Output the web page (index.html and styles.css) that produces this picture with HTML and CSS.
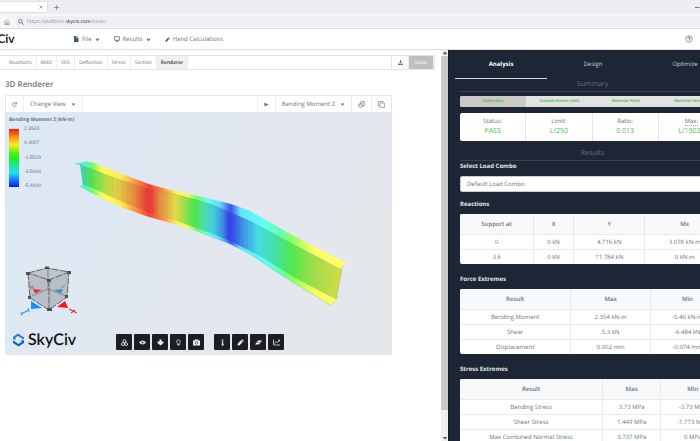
FILE: index.html
```
<!DOCTYPE html>
<html lang="en">
<head>
<meta charset="utf-8">
<title>SkyCiv Beam</title>
<link rel="stylesheet" href="styles.css">
</head>
<body>
<svg class="defs" aria-hidden="true">
  <defs>
    <symbol id="caret" viewBox="0 0 8 8"><path d="M1 2.500h6L4 6z" fill="currentColor"/></symbol>
    <symbol id="chev" viewBox="0 0 8 8"><path d="M1.500 2.500 4 5.500 6.500 2.500" fill="none" stroke="currentColor" stroke-width="1.700"/></symbol>
    <symbol id="pen" viewBox="0 0 16 16"><path d="M1 15l1-5 7-7 4 4-7 7zM10 2l2-1.500 3.500 3.500L14 6z" fill="currentColor"/></symbol>
  </defs>
</svg>
<div class="tabstrip">
  <div class="tab"><button class="plain" aria-label="Close tab"><svg class="i4" viewBox="0 0 8 8"><path d="M1 1l6 6M7 1 1 7" stroke="currentColor" stroke-width="1.300"/></svg></button></div>
  <button class="plain newtab" aria-label="New tab"><svg class="i5" viewBox="0 0 10 10"><path d="M5 0v10M0 5h10" stroke="currentColor" stroke-width="1.500"/></svg></button>
  <button class="plain minimize" aria-label="Minimize"><svg class="i5" viewBox="0 0 10 10"><path d="M0 5h9" stroke="currentColor" stroke-width="2"/></svg></button>
</div>
<div class="addressbar">
  <button class="plain" aria-label="Home"><svg class="i6" viewBox="0 0 12 12" fill="none" stroke="currentColor"><path d="M1.500 5.500 6 1l4.500 4.500V11h-9zM4.500 11V7h3v4"/></svg></button>
  <label class="url">
    <svg class="i6" viewBox="0 0 12 12" fill="none" stroke="currentColor" stroke-width="1.500"><circle cx="4.500" cy="4.500" r="3.500"/><path d="M7 7l4.500 4.500"/></svg>
    <input type="text" value="https://platform.skyciv.com/beam" aria-label="Address">
  </label>
</div>
<header class="appbar">
  <a class="brand" href="#">SkyCiv</a>
  <nav class="menu">
    <button class="plain"><svg class="i6" viewBox="0 0 12 12"><path d="M2 0h5v4h4v8H2zM8 0l3 3H8z" fill="#415c6b"/></svg>File<svg class="i5"><use href="#chev"/></svg></button>
    <button class="plain"><svg class="i6" viewBox="0 0 12 12"><path d="M.8 1.500h10.400v7H.8zM6 8.500V11M3.500 11h5" fill="none" stroke="#415c6b" stroke-width="1.400"/></svg>Results<svg class="i5"><use href="#chev"/></svg></button>
    <button class="plain"><svg class="i5 dark"><use href="#pen"/></svg>Hand Calculations</button>
  </nav>
  <button class="plain help" aria-label="Help"><svg class="i8" viewBox="0 0 16 16" fill="none" stroke="#4f7186"><circle cx="8" cy="8" r="6.500" stroke-width="1.300"/><path d="M5.500 6.500C5.500 3.500 10.500 3.500 10.500 6.500 10.500 8 8 8 8 10M8 11v1.500" stroke-width="2"/></svg></button>
</header>
<main class="workspace">
  <section class="left">
    <div class="content">
      <div class="modes">
        <button>Reactions</button><button>BMD</button><button>SFD</button><button>Deflection</button><button>Stress</button><button>Section</button><button class="on">Renderer</button>
        <button class="download" aria-label="Download"><svg class="i5" viewBox="0 0 10 10"><path d="M4 0h2v4h2L5 7 2 4h2zM0 7h2l3 1.500L8 7h2v3H0z" fill="currentColor"/></svg></button>
        <button class="solve">Solve</button>
      </div>
      <h1>3D Renderer</h1>
      <div class="viewer">
        <div class="viewbar">
          <button aria-label="Reset"><svg class="i5" viewBox="0 0 10 10"><path d="M8 3A4 4 0 1 0 8.500 6.500M9 0v4H5" fill="none" stroke="currentColor" stroke-width="1.400"/></svg></button>
          <button>Change View<svg class="i5"><use href="#caret"/></svg></button>
          <button class="play" aria-label="Play"><svg class="i5" viewBox="0 0 12 12"><path d="M1 1l10 5-10 5z" fill="currentColor"/></svg></button>
          <button>Bending Moment Z<svg class="i5"><use href="#caret"/></svg></button>
          <button aria-label="Paste"><svg class="i7" viewBox="0 0 14 14" fill="none" stroke="currentColor" stroke-width="1.300"><path d="M6 3.500V1h6.500v8.500H8M5.500 4 8 6.500V12H1.500V7L4.500 4H6M5 4v3H2M8 6l3-3"/></svg></button>
          <button aria-label="Copy"><svg class="i7" viewBox="0 0 14 14" fill="none" stroke="currentColor" stroke-width="1.200"><path d="M4 10H1V1h9v3"/><rect x="4" y="4" width="9" height="9" rx="1"/></svg></button>
        </div>
        <div class="scene">
          <svg class="beam" viewBox="0 0 388 244" role="img" aria-label="Beam bending moment">
            <defs>
              <linearGradient id="web" gradientUnits="userSpaceOnUse" x1="75" y1="0" x2="347" y2="0">
                <stop offset=".02" stop-color="#3fcfc8"/><stop offset=".06" stop-color="#50e04e"/><stop offset=".12" stop-color="#c0dc48"/><stop offset=".16" stop-color="#e2cc45"/><stop offset=".22" stop-color="#e58a40"/><stop offset=".265" stop-color="#e93c38"/><stop offset=".285" stop-color="#e84038"/><stop offset=".31" stop-color="#e28a42"/><stop offset=".37" stop-color="#e3d947"/><stop offset=".44" stop-color="#4ee44d"/><stop offset=".48" stop-color="#49dcae"/><stop offset=".51" stop-color="#43d0df"/><stop offset=".545" stop-color="#3f8fe8"/><stop offset=".568" stop-color="#3540e8"/><stop offset=".583" stop-color="#3850e6"/><stop offset=".62" stop-color="#3f96e7"/><stop offset=".675" stop-color="#45dce2"/><stop offset=".74" stop-color="#48e0a4"/><stop offset=".8" stop-color="#4ee94b"/><stop offset=".86" stop-color="#90e04b"/><stop offset=".98" stop-color="#d6da48"/>
              </linearGradient>
              <linearGradient id="flange" gradientUnits="userSpaceOnUse" x1="75" y1="0" x2="347" y2="0">
                <stop offset="0" stop-color="#55f3f5"/><stop offset=".035" stop-color="#55f3d5"/><stop offset=".065" stop-color="#70fa65"/><stop offset=".1" stop-color="#fff95a"/><stop offset=".17" stop-color="#ffed55"/><stop offset=".22" stop-color="#ff9848"/><stop offset=".275" stop-color="#f33f3b"/><stop offset=".33" stop-color="#ff9446"/><stop offset=".375" stop-color="#fff557"/><stop offset=".415" stop-color="#f4ff5c"/><stop offset=".45" stop-color="#70fa72"/><stop offset=".49" stop-color="#61fff3"/><stop offset=".535" stop-color="#5cdcff"/><stop offset=".575" stop-color="#414ee9"/><stop offset=".61" stop-color="#5de7ff"/><stop offset=".7" stop-color="#62fff5"/><stop offset=".76" stop-color="#65ffad"/><stop offset=".8" stop-color="#8cff60"/><stop offset=".88" stop-color="#fcff61"/><stop offset="1" stop-color="#ffff70"/>
              </linearGradient>
              <clipPath id="webclip"><path d="M80 163 92 168 120 178 147 187 173 192 193 197 210 202 230 210 250 219 287 239 343 268 337 299 297 278 260 255 230 240 210 232 173 219 148 211.500 120 200 92 187 83 184Z"/></clipPath>
            </defs>
            <g transform="translate(-5 -111)">
              <path fill="url(#flange)" d="M79 185.500 85 183 92 187 120 199 148 210 173 217 210 229 230 238 260 253 297 276 338 295 339 297 332 305.500 283 275 250 253 230 243 210 235 190 228 170 222 147 215.500 123 207 103 198Z"/>
              <path fill="none" stroke="#35b990" stroke-opacity=".5" stroke-width=".7" d="M200 231.500 230 243 250 253 283 275 332 305"/>
              <g clip-path="url(#webclip)">
                <path fill="url(#web)" d="M75 155h275v150H75z"/>
                <path stroke="#154ba0" stroke-opacity=".1" stroke-width=".8" d="M210 190v60M214 190v60M218 190v60M222 190v60M226 190v60M236 190v60M240 190v70M244 190v70M248 190v70M252 190v70"/>
                <path stroke="#b06030" stroke-opacity=".1" stroke-width=".8" d="M108 160v50M113 160v50M118 160v50M123 160v60M128 160v60M133 160v60M138 160v60M153 160v60M158 160v60M163 160v60M168 160v60"/>
              </g>
              <path fill="url(#flange)" d="M75 162.500 86 160.500 93 161.500 120 172.500 150 183.500 170 189 193 194 210 198 225 201.500 237 205 250 210 268 220 287 231 317 247 347 262 341 268.500 287 240 250 220 230 211 210 203 193 198 173 193 148 188 120 179 100 171.500 81 164Z"/>
              <path fill="none" stroke="#508050" stroke-opacity=".3" stroke-width=".6" d="M75 162.500 81 164 100 171.500 120 179 148 188 173 193 193 198 210 203 230 211 250 220 287 240 341 268.500 347 262M343 268l-6 29 2-1-7 9"/>
            </g>
          </svg>
          <div class="legend">
            <strong>Bending Moment Z (kN-m)</strong>
            <div class="scale"><div class="ramp"></div><ol><li>2.3543</li><li>0.4007</li><li>-1.5529</li><li>-3.5064</li><li>-5.4600</li></ol></div>
          </div>
          <div class="corner">
            <svg class="cube" viewBox="0 0 60 52" aria-label="View cube">
              <path d="M8 8 27 3 49 7 47 32 29 45 10 33Z" fill="#a7adb2" fill-opacity=".7"/>
              <path d="M8 8 27 3 49 7 29 15Z" fill="#bdc5ca"/>
              <path d="M12 31 28 24 46 31M28 24V4" fill="none" stroke="#727a80" stroke-width=".8"/>
              <path d="M13 24l9 1-7 3.500z" fill="#d63438"/><path d="M43 24l-9 1 7 3.500z" fill="#4388c8"/>
              <path d="M10 21l4 3m-4 0 4-3" stroke="#d63438" stroke-width=".8"/><path d="M41 23l4-3" stroke="#4388c8" stroke-width=".8"/>
              <path d="M8 8 27 3 49 7 29 15ZM8 8 10 33 29 45 47 32 49 7M29 15v30" fill="none" stroke="#53595d" stroke-width=".9" stroke-dasharray="7 1.200"/>
              <g fill="#4b5155"><path d="M6 7h4v3H6zM25 1.500h4V4h-4zM47 6h4v3h-4zM27 14h4v3h-4zM27 43h5v3h-5zM8 31h3v3H8zM45 30h3v3h-3z"/></g>
              <path d="M11 36v8l11-1z" fill="#198cff"/><path d="M37 42l8-6 3 7z" fill="#ff1414"/>
              <path d="M1 49l8-4m-8 2.500 1 3m6-7 1 3" fill="none" stroke="#3692ef" stroke-width="1.200"/><path d="M49 44l8 4m-6 0 4-3" fill="none" stroke="#e93636" stroke-width="1.200"/>
            </svg>
            <div class="logo"><svg viewBox="0 0 26 28"><path d="M2 12V8L12 1l12 8v4l-4-2L12 6 7 9v5z" fill="#267bdc"/><path d="M24 15v5l-11 7L2 20v-5l4 2 7 5 6-4v-4z" fill="#1462bd"/></svg>SkyCiv</div>
          </div>
          <div class="tools">
            <div>
              <button aria-label="Members"><svg viewBox="0 0 14 14" fill="none" stroke="#fff" stroke-width="1.600"><path d="M7 1l3 2v3L7 7.500 4 6V3zM4 7l3 2v3l-3 1-3-1V9zM10 7l3 2v3l-3 1-3-1V9z"/></svg></button>
              <button aria-label="Visibility"><svg viewBox="0 0 14 14"><path d="M0 7Q7-1 14 7 7 15 0 7z" fill="#eee"/><circle cx="7" cy="7" r="2" fill="#333"/></svg></button>
              <button aria-label="Loads"><svg viewBox="0 0 14 14"><path d="M5 1h4v4h4v3l-6 5-6-5V5h4z" fill="#eee"/></svg></button>
              <button aria-label="Lighting"><svg viewBox="0 0 14 14" fill="none" stroke="#eee" stroke-width="1.600"><path d="M5.500 9C2 6 3.500 1.500 7 1.500S12 6 8.500 9v3h-3zM5.500 10.500h3"/></svg></button>
              <button aria-label="Screenshot"><svg viewBox="0 0 14 14"><path d="M0 3h3l1-2h6l1 2h3v10H0z" fill="#eee"/><circle cx="7" cy="7.500" r="2.600" fill="none" stroke="#333" stroke-width="1.300"/></svg></button>
            </div>
            <div>
              <button aria-label="Information"><svg viewBox="0 0 14 14"><path d="M5.500 1h3v2.500h-3zM5 5h3.500v6H10v2H5v-2h1V7H5z" fill="#eee"/></svg></button>
              <button aria-label="Draw"><svg><use href="#pen"/></svg></button>
              <button aria-label="Erase"><svg viewBox="0 0 14 14"><path d="M6 3h8l-6 8H0z" fill="#eee"/><path d="M3.500 7h6" stroke="#222"/></svg></button>
              <button aria-label="Graph"><svg viewBox="0 0 14 14" fill="none" stroke="#eee" stroke-width="1.500"><path d="M1 1v11h13M3 9l3-4 3 2 4-5M10 2h3v3"/></svg></button>
            </div>
          </div>
        </div>
      </div>
    </div>
    <div class="scrollbar" aria-hidden="true"><svg viewBox="0 0 8 8"><path d="M1 5.500 4 2l3 3.500z" fill="#555"/></svg><div class="thumb"></div><svg viewBox="0 0 8 8"><path d="M1 2.500h6L4 6z" fill="#555"/></svg></div>
  </section>
  <aside class="panel">
    <div class="sheet">
      <nav class="pages"><a class="on" href="#">Analysis</a><a href="#">Design</a><a href="#">Optimize</a></nav>
      <div class="results">
        <h2>Summary</h2>
        <div class="checks"><button class="on">Deflection</button><button>Custom Stress Limit</button><button>Material Yield</button><button>Material Strength</button></div>
        <dl class="stats">
          <div><dt>Status:</dt><dd>PASS</dd></div><div><dt>Limit:</dt><dd>L/250</dd></div><div><dt>Ratio:</dt><dd>0.013</dd></div><div><dt><abbr>Max:</abbr></dt><dd>L/19024</dd></div>
        </dl>
        <h2 class="second">Results</h2>
        <label class="title first" for="combo">Select Load Combo</label>
        <select id="combo"><option>Default Load Combo</option></select>
        <h3 class="title">Reactions</h3>
        <table class="reactions">
          <colgroup><col class="a"><col class="b"><col class="c"><col></colgroup>
          <thead><tr><th>Support at</th><th>X</th><th>Y</th><th>Mx</th></tr></thead>
          <tbody><tr><td class="link">0</td><td>0 kN</td><td>4.716 kN</td><td>3.078 kN-m</td></tr><tr><td>3.6</td><td>0 kN</td><td>11.784 kN</td><td>0 kN-m</td></tr></tbody>
        </table>
        <h3 class="title">Force Extremes</h3>
        <table class="force">
          <colgroup><col class="a"><col class="b"><col></colgroup>
          <thead><tr><th>Result</th><th>Max</th><th>Min</th></tr></thead>
          <tbody><tr><td>Bending Moment</td><td>2.354 kN-m</td><td>-5.46 kN-m</td></tr><tr><td>Shear</td><td>5.3 kN</td><td>-6.484 kN</td></tr><tr><td>Displacement</td><td>0.002 mm</td><td>-0.074 mm</td></tr></tbody>
        </table>
        <h3 class="title">Stress Extremes</h3>
        <table class="stress">
          <colgroup><col class="a"><col class="b"><col></colgroup>
          <thead><tr><th>Result</th><th>Max</th><th>Min</th></tr></thead>
          <tbody><tr><td>Bending Stress</td><td>3.73 MPa</td><td>-3.73 MPa</td></tr><tr><td>Shear Stress</td><td>1.449 MPa</td><td>-1.773 MPa</td></tr><tr><td>Max Combined Normal Stress</td><td>3.737 MPa</td><td>0 MPa</td></tr></tbody>
        </table>
      </div>
    </div>
  </aside>
</main>
</body>
</html>
```
FILE: styles.css
```
* { box-sizing: border-box; }
body { margin: 0; height: 100vh; display: flex; flex-direction: column; overflow: hidden; background: #fff; color: #66757e; font: 6px/8px "Open Sans", "Noto Sans", sans-serif; text-rendering: geometricPrecision; }
button, input, select { font: inherit; color: inherit; margin: 0; text-rendering: inherit; }
button { display: flex; align-items: center; justify-content: center; gap: 5px; padding: 0; border: 0; background: none; white-space: nowrap; }
a { color: inherit; text-decoration: none; }
svg { display: block; flex: none; }
.defs { position: absolute; width: 0; height: 0; }
.i4 { width: 4px; height: 4px; }
.i5 { width: 5px; height: 5px; }
.i6 { width: 6px; height: 6px; }
.i7 { width: 7px; height: 7px; }
.i8 { width: 8px; height: 8px; }

.tabstrip { display: flex; align-items: center; height: 15px; flex: none; background: #eeedf2; border-bottom: 1px solid #f8f8fa; color: #777; }
.tab { display: flex; align-items: center; justify-content: flex-end; width: 48px; height: 12px; padding-right: 4px; background: #fff; border: 1px solid #e0e0e4; border-left: 0; border-radius: 0 2px 2px 0; }
.newtab { margin-left: 6px; }
.minimize { margin-left: auto; }
.addressbar { display: flex; align-items: center; gap: 6px; height: 14px; flex: none; padding: 0 0 0 4px; background: #f7f7f9; border-bottom: 1px solid #ddd; color: #626268; }
.url { display: flex; align-items: center; gap: 3px; flex: 1; height: 11px; padding-left: 2px; background: #efeef3; border-radius: 2px 0 0 2px; }
.url input { flex: 1; padding: 0; border: 0; outline: 0; height: 9px; font-size: 5px; color: transparent; background: linear-gradient(90deg, #8a8a90 39px, #222 39px 64px, #8a8a90 64px); background-clip: text; -webkit-background-clip: text; }

.appbar { display: flex; align-items: center; height: 21px; flex: none; border-bottom: 1px solid #ddd; }
.brand { width: 73px; font: 700 12px/16px Lato, sans-serif; color: #181c20; text-indent: -22px; }
.menu { display: flex; gap: 14px; }
.menu button { gap: 3px; }
.dark { color: #415c6b; }
.help { margin-left: auto; margin-right: 7px; }

.workspace { display: grid; grid-template-columns: 64fr 36fr; flex: 1; min-height: 0; }
.left { display: flex; min-width: 0; }
.content { flex: 1; min-width: 0; padding: 5px 6px 0 0; }
.modes { display: flex; height: 15px; border: 1px solid #e5e5e5; border-left: 0; padding-left: 5px; font-size: 5px; }
.modes button { padding: 0 4px; border-right: 1px solid #eee; }
.modes .on { background: #f0f0f0; color: #333; font-weight: 600; }
.modes .download { margin-left: auto; width: 18px; border-left: 1px solid #e5e5e5; }
.modes .solve { width: 25px; background: #bfbfbf; color: #fff; }
h1 { margin: 9px 0 5px 5px; font-size: 8px; line-height: 11px; font-weight: 600; }
.viewer { width: 89%; margin-left: 5px; }
.viewbar { display: flex; height: 17px; border: 1px solid #e5e5e5; border-bottom: 0; border-radius: 2px 2px 0 0; }
.viewbar button { padding: 0 6px; border-right: 1px solid #eee; }
.viewbar button:last-child { border-right: 0; }
.viewbar .play { margin-left: auto; border-left: 1px solid #eee; }
.scene { position: relative; background: linear-gradient(115deg, #dce9f6, #e3e7ef 60%, #e5e8e9); }
.beam { width: 100%; height: auto; }
.legend { position: absolute; left: 4px; top: 4px; font-size: 5px; }
.scale { display: flex; gap: 5px; margin-top: 5px; font-family: "Liberation Sans", sans-serif; }
.ramp { width: 10px; height: 58px; background: linear-gradient(#f21d0d, #ff9a13 15%, #f5ee20 27%, #46ef15 43%, #20f020 52%, #18e8ad 65%, #21ddf0 76%, #1780ff 87%, #1212ee); }
.scale ol { display: flex; flex-direction: column; justify-content: space-between; margin: -2px 0; padding: 0; list-style: none; line-height: 5px; }
.corner { position: absolute; left: 7px; bottom: 6px; display: flex; flex-direction: column; gap: 14px; }
.cube { width: 60px; height: 52px; margin-left: 8px; }
.logo { display: flex; align-items: center; gap: 3px; font: 600 16px/18px Lato, sans-serif; color: #111; }
.logo svg { width: 13px; height: 14px; }
.tools { position: absolute; left: 111px; bottom: 5px; display: flex; gap: 10px; }
.tools div { display: flex; gap: 2px; }
.tools button { width: 16px; height: 16px; background: #1c1e20; border-radius: 1px; color: #eee; }
.tools svg { width: 7px; height: 7px; }
.scrollbar { display: flex; flex-direction: column; align-items: center; width: 7px; background: #f0f0f0; }
.scrollbar svg { width: 6px; height: 6px; }
.thumb { width: 100%; flex: 1; margin-bottom: 25px; background: #c9c9c9; }

.panel { overflow: hidden; background: #1d2635; border-left: 1px solid #111a28; }
.sheet { margin-right: -31px; padding-left: 6px; }
.pages { display: grid; grid-template-columns: repeat(3, 1fr); height: 22px; color: #c8cdd3; text-align: center; line-height: 28px; }
.pages .on { color: #fff; font-weight: 700; border-bottom: 1px solid #d5d5dd; }
.results { padding: 0 6px 0 5px; }
h2 { margin: 8px 0 4px; padding-bottom: 1px; border-bottom: 1px solid #3a4351; color: #65707e; font-size: 7px; line-height: 10px; font-weight: 400; text-align: center; }
h2.second { margin: 8px 0 1px; }
.checks { display: grid; grid-template-columns: repeat(4, 1fr); height: 11px; background: #e1e3e4; border-radius: 2px; overflow: hidden; color: #59c04f; font-size: 4px; font-weight: 700; }
.checks .on { background: #cbc9c6; }
.stats { display: grid; grid-template-columns: repeat(4, 1fr); margin: 6px 0 0; background: #fff; border-radius: 2px; text-align: center; }
.stats div { padding: 4px 0 4px; border-right: 1px solid #e5e5e5; }
.stats dt { line-height: 8px; }
.stats dd { margin: 2px 0 0; font-size: 7px; line-height: 10px; color: #55bb48; }
abbr { border-bottom: 1px dotted #999; }
.title { display: block; margin: 11px 0 6px; font-size: 6px; line-height: 8px; font-weight: 700; color: #e3e6ea; }
.title.first { margin-top: 1px; }
select { display: block; width: 100%; height: 16px; padding: 0 6px; border: 1px solid #ccc; border-radius: 2px; background: #fff; appearance: none; }
select + .title { margin-top: 8px; }
table { width: 100%; table-layout: fixed; border-collapse: separate; border-spacing: 0; background: #fff; border-radius: 2px; overflow: hidden; text-align: center; }
th, td { padding: 0; height: 15px; border-right: 1px solid #e8eaec; border-bottom: 1px solid #e8eaec; white-space: nowrap; line-height: 8px; }
th { height: 21px; background: #f8f9fb; font-weight: 600; }
tbody tr:last-child td { height: 14px; border-bottom: 0; }
.link { color: #b07058; }
.reactions .a { width: 28%; }
.reactions .b { width: 15%; }
.reactions .c { width: 27%; }
.force .a { width: 42%; }
.force .b { width: 30%; }
.stress .a { width: 54%; }
.stress .b { width: 22%; }
```
